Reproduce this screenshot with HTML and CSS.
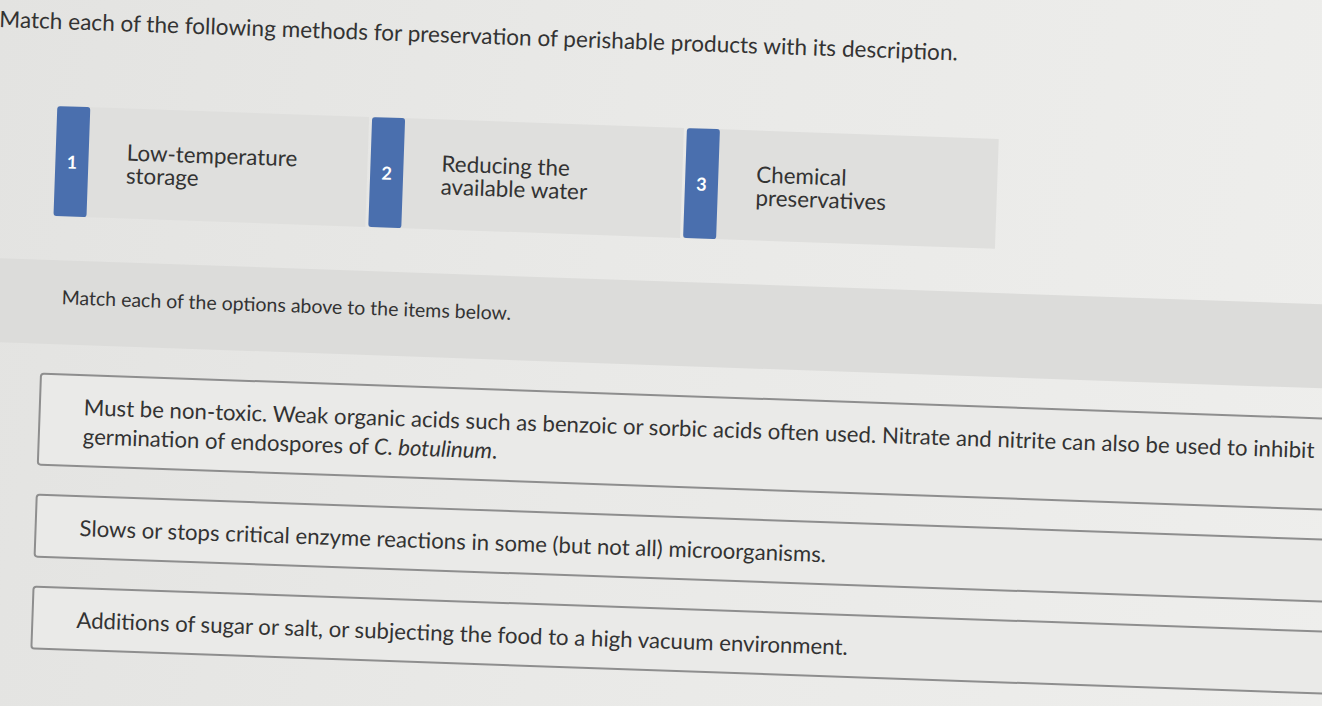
FILE: index.html
```html
<!DOCTYPE html>
<html lang="en">
  <head>
    <meta charset="utf-8">
    <title>Matching question</title>
    <link rel="stylesheet" href="styles.css">
  </head>
  <body>
    <div class="page">
      <p class="prompt">Match each of the following methods for preservation of perishable products with its description.</p>

      <div class="choices">
        <div class="choice">
          <span class="choice-num">1</span>
          <span class="choice-text">Low-temperature<br>storage</span>
        </div>
        <div class="choice">
          <span class="choice-num">2</span>
          <span class="choice-text">Reducing the<br>available water</span>
        </div>
        <div class="choice">
          <span class="choice-num">3</span>
          <span class="choice-text">Chemical<br>preservatives</span>
        </div>
      </div>

      <div class="instructions">
        <p>Match each of the options above to the items below.</p>
      </div>

      <div class="targets">
        <div class="target tall">
          <p>Must be non-toxic. Weak organic acids such as benzoic or sorbic acids often used. Nitrate and nitrite can also be used to inhibit germination of endospores of <i>C. botulinum</i>.</p>
        </div>
        <div class="target">
          <p>Slows or stops critical enzyme reactions in some (but not all) microorganisms.</p>
        </div>
        <div class="target">
          <p>Additions of sugar or salt, or subjecting the food to a high vacuum environment.</p>
        </div>
      </div>
    </div>
  </body>
</html>
```

FILE: styles.css
```css
html, body{
  margin:0;
  height:100%;
  overflow:hidden;
}
body{
  background:linear-gradient(100deg, #e3e3e1 0%, #e9e9e7 45%, #eeeeec 100%);
  font-family:Lato, "Open Sans", sans-serif;
  color:#333;
}
/* the whole sheet sits a little tilted, like the photographed screen */
.page{
  width:1400px;
  transform:rotate(2deg);
  transform-origin:0 0;
}
.prompt{
  margin:0;
  padding:6px 0 0 0;
  font-size:22.6px;
  line-height:26px;
  white-space:nowrap;
}
/*choices*/
.choices{
  display:flex;
  gap:3px;
  margin:72px 0 0 61px;
}
.choice{
  display:flex;
  width:312px;
  height:110px;
  background-color:#dfdfdd;
}
.choice-num{
  width:33px;
  flex:none;
  display:flex;
  align-items:center;
  justify-content:center;
  background-color:#4a6fae;
  border-radius:3px;
  color:#fff;
  font-weight:bold;
  font-size:18px;
}
.choice-text{
  align-self:center;
  padding-left:38px;
  font-size:22.4px;
  line-height:23px;
}
/*instruction band*/
.instructions{
  margin-top:44px;
  margin-left:3px;
  height:84px;
  background-color:#dcdcda;
}
.instructions p{
  margin:0;
  padding:25px 0 0 69px;
  font-size:19.5px;
}
/*targets*/
.targets{
  display:flex;
  flex-direction:column;
  gap:28px;
  margin:29px 0 0 53px;
}
.target{
  box-sizing:border-box;
  width:1340px;
  height:64px;
  padding:0 0 0 43px;
  display:flex;
  align-items:center;
  border:2px solid #8e8e8e;
  border-radius:4px;
  background-color:#eaeae8;
  font-size:22.2px;
  line-height:29px;
}
.target p{
  margin:0;
  max-width:1290px;
}
.target.tall{
  height:93px;
}
```
